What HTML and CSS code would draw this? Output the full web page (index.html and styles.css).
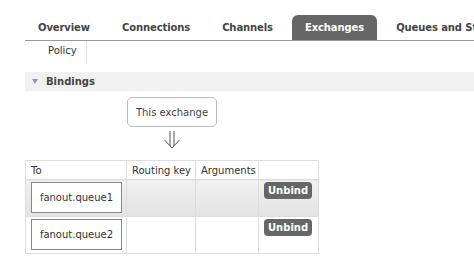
FILE: index.html
```html
<!DOCTYPE html>
<html lang="en">
<head>
    <meta charset="UTF-8">
    <title>Exchange: fanout</title>
    <link rel="stylesheet" href="styles.css">
</head>
<body>
    <ul class="tabs">
        <li><a href="#">Overview</a></li>
        <li><a href="#">Connections</a></li>
        <li><a href="#">Channels</a></li>
        <li class="selected"><a href="#">Exchanges</a></li>
        <li><a href="#">Queues and Streams</a></li>
    </ul>
    <ul class="subnav">
        <li><a href="#">Policy</a></li>
    </ul>

    <div class="section">
        <h2><span class="toggle"></span>Bindings</h2>
        <div class="hider">
            <div class="bindings-wrapper">
                <div class="exchange-box">This exchange</div>
                <svg class="arrow" width="18" height="19" viewBox="0 0 18 19">
                    <path d="M7 1v15M11 1v15M1.5 10l7.5 8 7.5-8" fill="none" stroke="#555" stroke-width="1"/>
                </svg>
            </div>
            <table class="list">
                <thead>
                    <tr>
                        <th class="col-to">To</th>
                        <th class="col-key">Routing key</th>
                        <th class="col-args">Arguments</th>
                        <th class="col-action"></th>
                    </tr>
                </thead>
                <tbody>
                    <tr class="alt1">
                        <td><span class="queue">fanout.queue1</span></td>
                        <td></td>
                        <td></td>
                        <td><button class="btn">Unbind</button></td>
                    </tr>
                    <tr class="alt2">
                        <td><span class="queue">fanout.queue2</span></td>
                        <td></td>
                        <td></td>
                        <td><button class="btn">Unbind</button></td>
                    </tr>
                </tbody>
            </table>
        </div>
    </div>
</body>
</html>
```

FILE: styles.css
```css
body {
    font-family: "DejaVu Sans", Verdana, sans-serif;
    font-size: 10px;
    color: #484848;
    margin: 0;
    background: #fff;
    overflow: hidden;
}
ul {
    list-style: none;
    margin: 0;
    padding: 0;
}
a {
    text-decoration: none;
    color: inherit;
}
.tabs {
    display: flex;
    margin: 15px 0 0 25px;
    border-bottom: 1px solid #999;
    white-space: nowrap;
}
.tabs li {
    margin-right: 6px;
}
.tabs a {
    display: block;
    height: 25px;
    line-height: 26px;
    padding: 0 13px;
    font-weight: bold;
    font-size: 10px;
    letter-spacing: -0.1px;
    color: #444;
    border-radius: 6px 6px 0 0;
}
.tabs .selected a {
    background: #666;
    color: #fff;
}
.subnav {
    display: flex;
    margin-left: 25px;
}
.subnav li {
    border-right: 1px solid #ddd;
    height: 22px;
    padding: 0 9px 0 23px;
    line-height: 20px;
    color: #333;
}
.section {
    margin: 9px 0 0 25px;
}
.section h2 {
    margin: 0;
    height: 19px;
    background: #f1f1f1;
    font-size: 10px;
    font-weight: bold;
    color: #444;
    display: flex;
    align-items: center;
}
.toggle {
    width: 0;
    height: 0;
    border-left: 3.5px solid transparent;
    border-right: 3.5px solid transparent;
    border-top: 5px solid #999;
    margin: 0 8px 0 7px;
}
.bindings-wrapper {
    margin: 6px 0 0 102px;
    width: 90px;
    text-align: center;
}
.exchange-box {
    border: 1px solid #bbb;
    border-radius: 5px;
    height: 28px;
    line-height: 29px;
    color: #444;
}
.arrow {
    display: block;
    margin: 3px auto 0;
}
.list {
    border-collapse: collapse;
    table-layout: fixed;
    width: 294px;
    margin-top: 11px;
}
.list th {
    font-weight: normal;
    text-align: left;
    white-space: nowrap;
    height: 18px;
    padding: 0 5px;
    border: 1px solid #ddd;
    color: #333;
}
.list .col-to {
    width: 90px;
}
.list .col-key {
    width: 58px;
}
.list .col-args {
    width: 52px;
}
.list td {
    border: 1px solid #ddd;
    padding: 2px 4px 3px 5px;
    vertical-align: top;
    height: 31px;
}
.alt1 td {
    background: linear-gradient(#f1f1f1, #e3e3e3);
}
.queue {
    display: block;
    border: 1px solid #888;
    width: 89px;
    height: 29px;
    line-height: 30px;
    text-align: center;
    color: #333;
    background: #fff;
}
.btn {
    display: block;
    font-family: inherit;
    font-size: 10px;
    font-weight: bold;
    color: #fff;
    background: #666;
    border: none;
    border-radius: 4px;
    height: 17px;
    padding: 0 4px;
    line-height: 17px;
}
```
